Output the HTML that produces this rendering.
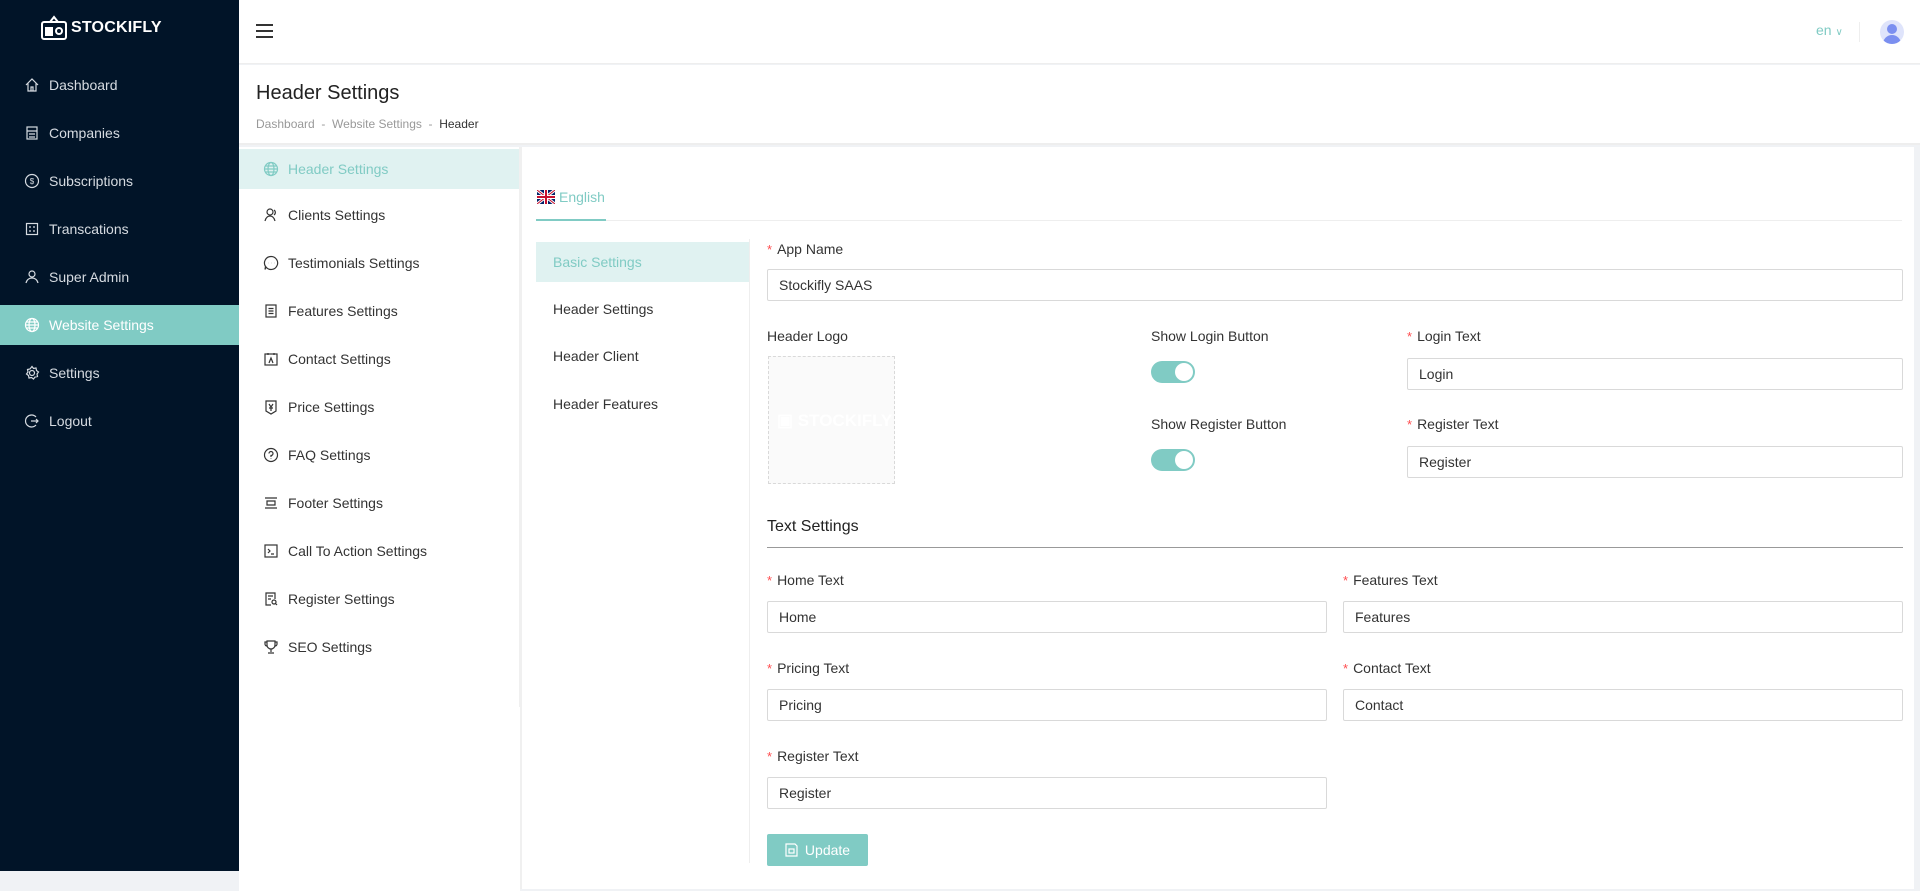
<!DOCTYPE html>
<html><head><meta charset="utf-8"><style>
*{box-sizing:border-box;margin:0;padding:0}
body{width:1920px;height:891px;overflow:hidden;background:#f0f2f5;font-family:"Liberation Sans",sans-serif;font-size:14px;color:#333;position:relative}
.abs{position:absolute}
.sb{left:0;top:0;width:239px;height:871px;background:#011428}
.sbi{position:absolute;left:0;width:239px;height:40px;color:#d6dbe1;font-size:14px;display:flex;align-items:center;padding-left:24px}
.sbi svg{width:16px;height:16px;margin-right:9px}
.sbi.act{background:#80cbc4;color:#fff}
.top{left:239px;top:0;width:1681px;height:64px;background:#fff;border-bottom:1px solid #eee}
.ph{left:239px;top:65px;width:1681px;height:80px;background:#fff;border-bottom:2px solid #eee}
.menu{left:239px;top:147px;width:281px;height:744px;background:#fff}
.mi{position:absolute;left:0;width:281px;height:40px;display:flex;align-items:center;padding-left:24px;color:#333}
.mi svg{width:16px;height:16px;margin-right:9px}
.mi.act{background:#e0f2f1;color:#80cbc4}
.card{left:520px;top:147px;width:1394px;height:742px;background:#fff;border-left:2px solid #f0f0f0}
.lab{position:absolute;font-size:14px;color:#333}
.lab i{color:#ff4d4f;font-style:normal;margin-right:5px;font-size:13px}
.inp{position:absolute;height:32px;border:1px solid #d9d9d9;border-radius:2px;padding-left:11px;line-height:30px;font-size:14px;color:#333}
.tg{position:absolute;width:44px;height:22px;border-radius:11px;background:#80cbc4}
.tg:after{content:"";position:absolute;right:2px;top:2px;width:18px;height:18px;border-radius:50%;background:#fff}
.it{position:absolute;left:536px;width:213px;height:40px;display:flex;align-items:center;padding-left:17px;color:#333}
</style></head><body>
<div class="abs sb">
 <div class="abs" style="left:40px;top:14px;display:flex;align-items:center;color:#fff;font-weight:bold;font-size:16px;letter-spacing:0.2px">
  <svg width="28" height="28" viewBox="0 0 28 28" fill="none" stroke="#fff" stroke-width="2"><rect x="2" y="8" width="24" height="17" rx="2"/><path d="M10 8l4-5 4 5"/><rect x="6" y="14" width="6" height="7" fill="#fff"/><circle cx="19" cy="17" r="3"/></svg>
  <span style="margin-left:3px">STOCKIFLY</span></div>
 <div class="sbi" style="top:65px"><svg viewBox="0 0 16 16" fill="none" stroke="#d6dbe1" stroke-width="1.2"><path d="M2 8l6-6 6 6M4 6.5V14h8V6.5M7 14v-4h2v4"/></svg>Dashboard</div>
 <div class="sbi" style="top:113px"><svg viewBox="0 0 16 16" fill="none" stroke="#d6dbe1" stroke-width="1.2"><rect x="3" y="2" width="10" height="12"/><path d="M3 6h10M5 9h6M5 12h6"/></svg>Companies</div>
 <div class="sbi" style="top:161px"><svg viewBox="0 0 16 16" fill="none" stroke="#d6dbe1" stroke-width="1.2"><circle cx="8" cy="8" r="6.5"/><text x="8" y="11" font-size="8" text-anchor="middle" fill="#d6dbe1" stroke="none">$</text></svg>Subscriptions</div>
 <div class="sbi" style="top:209px"><svg viewBox="0 0 16 16" fill="none" stroke="#d6dbe1" stroke-width="1.2"><rect x="2.5" y="2.5" width="11" height="11"/><path d="M5 6h2M5 10h2M9 6h2M9 10h2"/></svg>Transcations</div>
 <div class="sbi" style="top:257px"><svg viewBox="0 0 16 16" fill="none" stroke="#d6dbe1" stroke-width="1.2"><circle cx="8" cy="5" r="3"/><path d="M2 14c1-4 4-5 6-5s5 1 6 5"/></svg>Super Admin</div>
 <div class="sbi act" style="top:305px"><svg viewBox="0 0 16 16" fill="none" stroke="#fff" stroke-width="1.2"><circle cx="8" cy="8" r="6.5"/><ellipse cx="8" cy="8" rx="3" ry="6.5"/><path d="M1.5 8h13M2.5 5h11M2.5 11h11"/></svg>Website Settings</div>
 <div class="sbi" style="top:353px"><svg viewBox="0 0 16 16" fill="none" stroke="#d6dbe1" stroke-width="1.2"><circle cx="8" cy="8" r="2.5"/><path d="M8 1.5l1.5 2 2.5-.5.5 2.5 2 1.5-1.5 2 .5 2.5-2.5.5-1.5 2-2-1.5-2.5.5-.5-2.5-2-1.5 1.5-2-.5-2.5 2.5-.5z"/></svg>Settings</div>
 <div class="sbi" style="top:401px"><svg viewBox="0 0 16 16" fill="none" stroke="#d6dbe1" stroke-width="1.2"><path d="M12 4a6 6 0 1 0 0 8M7 8h7M12 6l2 2-2 2"/></svg>Logout</div>
</div>
<div class="abs top">
 <div class="abs" style="left:17px;top:24px;width:17px;height:14px;border-top:2px solid #333;border-bottom:2px solid #333"><div style="margin-top:4px;height:2px;background:#333"></div></div>
 <div class="abs" style="left:1577px;top:22px;color:#80cbc4;font-size:14px">en <span style="font-size:10px">&#x2228;</span></div>
 <div class="abs" style="left:1620px;top:22px;width:1px;height:20px;background:#eee"></div>
 <div class="abs" style="left:1641px;top:20px;width:24px;height:24px;border-radius:50%;background:#dfe4fb;overflow:hidden"><div class="abs" style="left:7px;top:4px;width:10px;height:10px;border-radius:50%;background:#7b8ff0"></div><div class="abs" style="left:3px;top:15px;width:18px;height:12px;border-radius:9px 9px 0 0;background:#7b8ff0"></div></div>
</div>
<div class="abs ph">
 <div class="abs" style="left:17px;top:17px;font-size:20px;color:#222">Header Settings</div>
 <div class="abs" style="left:17px;top:52px;font-size:12px;color:#999">Dashboard &nbsp;-&nbsp; Website Settings &nbsp;-&nbsp; <span style="color:#333">Header</span></div>
</div>
<div class="abs menu">
 <div class="mi act" style="top:2px"><svg viewBox="0 0 16 16" fill="none" stroke="#80cbc4" stroke-width="1.2"><circle cx="8" cy="8" r="6.5"/><ellipse cx="8" cy="8" rx="3" ry="6.5"/><path d="M1.5 8h13M2.5 5h11M2.5 11h11"/></svg>Header Settings</div>
 <div class="mi" style="top:48px"><svg viewBox="0 0 16 16" fill="none" stroke="#333" stroke-width="1.2"><circle cx="7" cy="5" r="3"/><path d="M2 14c1-4 3-5 5-5s4 1 5 5M11 3a3 3 0 0 1 0 5"/></svg>Clients Settings</div>
 <div class="mi" style="top:96px"><svg viewBox="0 0 16 16" fill="none" stroke="#333" stroke-width="1.2"><path d="M8 1.5a6.5 6.5 0 1 1-5 10.5L2 14.5l.5-3A6.5 6.5 0 0 1 8 1.5z"/><path d="M5 8h.1M8 8h.1M11 8h.1" stroke-width="1.8"/></svg>Testimonials Settings</div>
 <div class="mi" style="top:144px"><svg viewBox="0 0 16 16" fill="none" stroke="#333" stroke-width="1.2"><rect x="3" y="2" width="10" height="12"/><path d="M5.5 5.5h5M5.5 8h5M5.5 10.5h5"/></svg>Features Settings</div>
 <div class="mi" style="top:192px"><svg viewBox="0 0 16 16" fill="none" stroke="#333" stroke-width="1.2"><rect x="2" y="3" width="12" height="11"/><path d="M5 2v2M11 2v2M6 12l2-5 2 5"/></svg>Contact Settings</div>
 <div class="mi" style="top:240px"><svg viewBox="0 0 16 16" fill="none" stroke="#333" stroke-width="1.2"><path d="M3 2h10v10l-5 3-5-3z"/><path d="M6 5l2 3 2-3M8 8v4M6 9h4"/></svg>Price Settings</div>
 <div class="mi" style="top:288px"><svg viewBox="0 0 16 16" fill="none" stroke="#333" stroke-width="1.2"><circle cx="8" cy="8" r="6.5"/><path d="M6 6.5a2 2 0 1 1 2 2v1.5M8 11.5v.5"/></svg>FAQ Settings</div>
 <div class="mi" style="top:336px"><svg viewBox="0 0 16 16" fill="none" stroke="#333" stroke-width="1.2"><path d="M2 3h12M2 13h12M4 6h8v4H4z"/></svg>Footer Settings</div>
 <div class="mi" style="top:384px"><svg viewBox="0 0 16 16" fill="none" stroke="#333" stroke-width="1.2"><rect x="2" y="2" width="12" height="12"/><path d="M5 6l2 2-2 2M8 11h3"/></svg>Call To Action Settings</div>
 <div class="mi" style="top:432px"><svg viewBox="0 0 16 16" fill="none" stroke="#333" stroke-width="1.2"><path d="M8 14H3V2h9v6"/><path d="M5 5h5M5 8h3"/><circle cx="11" cy="11" r="2"/><path d="M12.5 12.5l1.5 1.5"/></svg>Register Settings</div>
 <div class="mi" style="top:480px"><svg viewBox="0 0 16 16" fill="none" stroke="#333" stroke-width="1.2"><path d="M4 2h8v4a4 4 0 0 1-8 0zM8 10v3M5 14h6M4 3H2v2a2 2 0 0 0 2 2M12 3h2v2a2 2 0 0 1-2 2"/></svg>SEO Settings</div>
</div>
<div class="abs" style="left:519px;top:147px;width:2px;height:560px;background:#f0f0f0"></div>
<div class="abs card"></div>
<div class="abs" style="left:537px;top:189px;display:flex;align-items:center;color:#80cbc4">
 <svg width="18" height="14" viewBox="0 0 18 14"><rect width="18" height="14" fill="#012169"/><path d="M0 0L18 14M18 0L0 14" stroke="#fff" stroke-width="3"/><path d="M0 0L18 14M18 0L0 14" stroke="#c8102e" stroke-width="1"/><path d="M9 0v14M0 7h18" stroke="#fff" stroke-width="4"/><path d="M9 0v14M0 7h18" stroke="#c8102e" stroke-width="2"/></svg>
 <span style="margin-left:4px">English</span></div>
<div class="abs" style="left:536px;top:220px;width:1366px;height:1px;background:#eee"></div>
<div class="abs" style="left:536px;top:219px;width:70px;height:2px;background:#80cbc4"></div>
<div class="abs" style="left:749px;top:239px;width:1px;height:624px;background:#eee"></div>
<div class="it" style="top:242px;background:#e0f2f1;color:#80cbc4">Basic Settings</div>
<div class="it" style="top:289px">Header Settings</div>
<div class="it" style="top:336px">Header Client</div>
<div class="it" style="top:384px">Header Features</div>

<div class="lab" style="left:767px;top:241px"><i>*</i>App Name</div>
<div class="inp" style="left:767px;top:269px;width:1136px">Stockifly SAAS</div>
<div class="lab" style="left:767px;top:328px">Header Logo</div>
<div class="abs" style="left:768px;top:356px;width:127px;height:128px;border:1px dashed #d9d9d9;background:#fafafa"><div class="abs" style="left:8px;top:54px;color:#fff;font-weight:bold;font-size:17px">&#9635; STOCKIFLY</div></div>
<div class="lab" style="left:1151px;top:328px">Show Login Button</div>
<div class="tg" style="left:1151px;top:361px"></div>
<div class="lab" style="left:1407px;top:328px"><i>*</i>Login Text</div>
<div class="inp" style="left:1407px;top:358px;width:496px">Login</div>
<div class="lab" style="left:1151px;top:416px">Show Register Button</div>
<div class="tg" style="left:1151px;top:449px"></div>
<div class="lab" style="left:1407px;top:416px"><i>*</i>Register Text</div>
<div class="inp" style="left:1407px;top:446px;width:496px">Register</div>

<div class="abs" style="left:767px;top:518px;font-size:16px;color:#222">Text Settings</div>
<div class="abs" style="left:767px;top:547px;width:1136px;height:1px;background:#999"></div>
<div class="lab" style="left:767px;top:572px"><i>*</i>Home Text</div>
<div class="inp" style="left:767px;top:601px;width:560px">Home</div>
<div class="lab" style="left:1343px;top:572px"><i>*</i>Features Text</div>
<div class="inp" style="left:1343px;top:601px;width:560px">Features</div>
<div class="lab" style="left:767px;top:660px"><i>*</i>Pricing Text</div>
<div class="inp" style="left:767px;top:689px;width:560px">Pricing</div>
<div class="lab" style="left:1343px;top:660px"><i>*</i>Contact Text</div>
<div class="inp" style="left:1343px;top:689px;width:560px">Contact</div>
<div class="lab" style="left:767px;top:748px"><i>*</i>Register Text</div>
<div class="inp" style="left:767px;top:777px;width:560px">Register</div>
<div class="abs" style="left:767px;top:834px;width:101px;height:32px;background:#80cbc4;border-radius:2px;color:#fff;display:flex;align-items:center;justify-content:center;font-size:14px">
 <svg width="13" height="14" viewBox="0 0 13 14" fill="none" stroke="#fff" stroke-width="1.2" style="margin-right:7px"><path d="M1 1h9l2 2v10H1z"/><rect x="4" y="6" width="5" height="4"/></svg>Update</div>
</body></html>
